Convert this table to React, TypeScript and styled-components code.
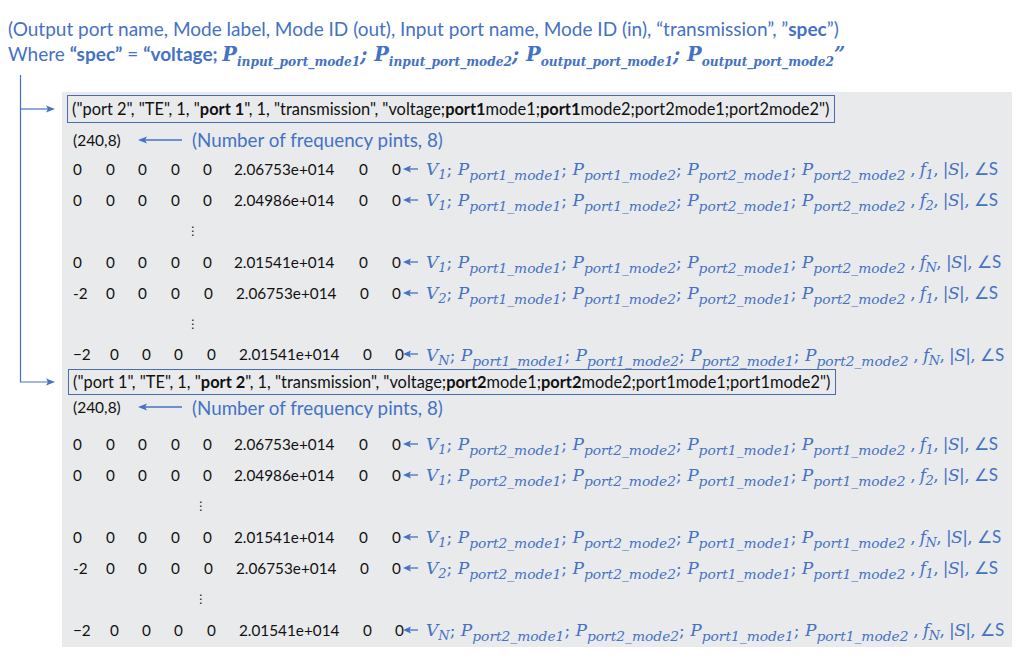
import React from 'react';
import styled, { createGlobalStyle } from 'styled-components';

const BLUE = '#4472C4';
const LINE = '#4472C4';
const SANS = "Lato, 'Liberation Sans', sans-serif";
const MATH = "'DejaVu Serif', 'Liberation Serif', serif";

const Global = createGlobalStyle`
  html, body { margin: 0; padding: 0; background: #ffffff; }
  body { font-family: ${SANS}; }
`;

const Page = styled.div`
  width: 1033px;
  height: 666px;
  overflow: hidden;
  display: flex;
  flex-direction: column;
`;

const Header = styled.header`
  padding: 16px 0 0 8px;
  color: ${BLUE};
  font-family: ${SANS};
  font-size: 19px;
`;

const HeaderLine = styled.div<{ $h: number }>`
  height: ${(p) => p.$h}px;
  line-height: ${(p) => p.$h}px;
  white-space: nowrap;
`;

const Strong = styled.b`
  font-weight: 700;
`;

const MathBold = styled.span`
  font-family: ${MATH};
  font-style: italic;
  font-weight: 700;
  font-size: 19.5px;
`;

const Sub = styled.span<{ $size: number; $drop?: number }>`
  font-size: ${(p) => p.$size}px;
  vertical-align: ${(p) => -(p.$drop ?? 5)}px;
  line-height: 0;
`;

const Body = styled.div`
  display: flex;
  margin-top: 9px;
`;

const Gutter = styled.div`
  width: 62px;
  flex: none;
`;

const Panel = styled.div`
  margin-top: 17px;
  width: 950px;
  height: 555px;
  box-sizing: border-box;
  background: #e9eaec;
  padding: 3px 0 0 5px;
  display: flex;
  flex-direction: column;
`;

const SpecBox = styled.div<{ $ml: number; $h: number }>`
  align-self: flex-start;
  margin-left: ${(p) => p.$ml}px;
  height: ${(p) => p.$h}px;
  line-height: ${(p) => p.$h - 2}px;
  box-sizing: border-box;
  border: 1px solid #4a6cad;
  padding: 0 5px 0 4px;
  font-size: 16.4px;
  color: #111;
  white-space: nowrap;
`;

const InfoRow = styled.div<{ $h: number; $pt: number; $pb: number }>`
  height: ${(p) => p.$h}px;
  box-sizing: border-box;
  padding: ${(p) => p.$pt}px 0 ${(p) => p.$pb}px 6px;
  display: flex;
  align-items: center;
`;

const InfoValue = styled.span`
  width: 65px;
  flex: none;
  font-size: 15.5px;
  color: #111;
`;

const InfoNote = styled.span`
  margin-left: 10px;
  color: ${BLUE};
  font-size: 18.8px;
  white-space: nowrap;
`;

const DataRow = styled.div<{ $h: number }>`
  height: ${(p) => p.$h}px;
  display: flex;
  align-items: center;
  padding-left: 6px;
  font-size: 15.3px;
  color: #111;
  white-space: nowrap;
`;

const Cell = styled.span<{ $w: number }>`
  width: ${(p) => p.$w}px;
  flex: none;
`;

const DotsRow = styled.div<{ $indent: number }>`
  height: 31px;
  display: flex;
  align-items: center;
  padding-left: ${(p) => p.$indent}px;
  font-family: 'DejaVu Sans', sans-serif;
  font-size: 12px;
  color: #111;
`;

const Anno = styled.span`
  margin-left: 8px;
  font-family: ${MATH};
  font-style: italic;
  font-size: 17px;
  color: ${BLUE};
  white-space: nowrap;
`;

const Sep = styled.span`
  font-style: normal;
`;

const Tail = styled.span`
  letter-spacing: -0.6px;
`;

const Upright = styled.span`
  font-family: ${SANS};
  font-style: normal;
  font-size: 17px;
  letter-spacing: 0;
`;

const Connector = () => (
  <svg width="62" height="312" viewBox="0 0 62 312">
    <g stroke={LINE} strokeWidth="1.2" fill="none">
      <path d="M20.5 0 V307 H50" />
      <path d="M20.5 34 H50" />
    </g>
    <g fill={LINE}>
      <polygon points="46,30.5 55,34 46,37.5 48,34" />
      <polygon points="46,303.5 55,307 46,310.5 48,307" />
    </g>
  </svg>
);

const LongArrow = () => (
  <svg width="44" height="10" viewBox="0 0 44 10">
    <path d="M6 5 H44" stroke={LINE} strokeWidth="1.3" />
    <polygon points="0,5 9,1.5 7,5 9,8.5" fill={LINE} />
  </svg>
);

const ShortArrow = () => (
  <svg width="15" height="10" viewBox="0 0 15 10">
    <path d="M6 5 H15" stroke={LINE} strokeWidth="1.3" />
    <polygon points="0,5 8,1.5 6.5,5 8,8.5" fill={LINE} />
  </svg>
);

const Term = ({ sub }: { sub: string }) => (
  <>
    P<Sub $size={13.8}>{sub}</Sub>
  </>
);

const Annotation = ({ v, f, terms }: { v: string; f: string; terms: string[] }) => (
  <Anno>
    V<Sub $size={13} $drop={4}>{v}</Sub>
    {terms.map((t) => (
      <React.Fragment key={t}>
        <Sep>; </Sep>
        <Term sub={t} />
      </React.Fragment>
    ))}
    <Tail>
      <Sep> , </Sep>f<Sub $size={13} $drop={4}>{f}</Sub>
      <Sep>, </Sep>|S|<Sep>, </Sep>
      <Upright>∠S</Upright>
    </Tail>
  </Anno>
);

const LAYOUTS: Record<string, number[]> = {
  a: [33, 32, 33, 32, 31, 125, 33, 11],
  b: [33, 32, 33, 33, 32, 124, 32, 11],
  c: [37, 32, 32, 33, 32, 124, 32, 8],
};

type Item =
  | { kind: 'row'; layout: 'a' | 'b' | 'c'; first: string; num: string; v: string; f: string }
  | { kind: 'dots' };

const ITEMS: Item[] = [
  { kind: 'row', layout: 'a', first: '0', num: '2.06753e+014', v: '1', f: '1' },
  { kind: 'row', layout: 'a', first: '0', num: '2.04986e+014', v: '1', f: '2' },
  { kind: 'dots' },
  { kind: 'row', layout: 'a', first: '0', num: '2.01541e+014', v: '1', f: 'N' },
  { kind: 'row', layout: 'b', first: '-2', num: '2.06753e+014', v: '2', f: '1' },
  { kind: 'dots' },
  { kind: 'row', layout: 'c', first: '−2', num: '2.01541e+014', v: 'N', f: 'N' },
];

const Block = ({
  terms,
  dotsIndent,
  lastH,
}: {
  terms: string[];
  dotsIndent: number;
  lastH: number;
}) => (
  <>
    {ITEMS.map((it, idx) => {
      if (it.kind === 'dots') {
        return (
          <DotsRow key={idx} $indent={dotsIndent}>
            ⋮
          </DotsRow>
        );
      }
      const widths = LAYOUTS[it.layout];
      const values = [it.first, '0', '0', '0', '0', it.num, '0', '0'];
      return (
        <DataRow key={idx} $h={idx === ITEMS.length - 1 ? lastH : 31}>
          {values.map((val, i) => (
            <Cell key={i} $w={widths[i]}>
              {val}
            </Cell>
          ))}
          <ShortArrow />
          <Annotation v={it.v} f={it.f} terms={terms} />
        </DataRow>
      );
    })}
  </>
);

export default function App() {
  return (
    <Page>
      <Global />
      <Header>
        <HeaderLine $h={26}>
          (Output port name, Mode label, Mode ID (out), Input port name, Mode ID (in), “transmission”, ”
          <Strong>spec</Strong>”)
        </HeaderLine>
        <HeaderLine $h={24}>
          Where <Strong>“spec”</Strong> = <Strong>“voltage; </Strong>
          <MathBold>
            P<Sub $size={12.2}>input_port_mode1</Sub>; P<Sub $size={12.2}>input_port_mode2</Sub>; P
            <Sub $size={12.2}>output_port_mode1</Sub>; P<Sub $size={12.2}>output_port_mode2</Sub>”
          </MathBold>
        </HeaderLine>
      </Header>
      <Body>
        <Gutter>
          <Connector />
        </Gutter>
        <Panel>
          <SpecBox $ml={0} $h={28}>
            ("port 2", "TE", 1, "<Strong>port 1</Strong>", 1, "transmission", "voltage;
            <Strong>port1</Strong>mode1;<Strong>port1</Strong>mode2;port2mode1;port2mode2")
          </SpecBox>
          <InfoRow $h={30} $pt={3} $pb={0}>
            <InfoValue>(240,8)</InfoValue>
            <LongArrow />
            <InfoNote>(Number of frequency pints, 8)</InfoNote>
          </InfoRow>
          <Block terms={['port1_mode1', 'port1_mode2', 'port2_mode1', 'port2_mode2']} dotsIndent={120} lastH={30} />
          <SpecBox $ml={1} $h={26}>
            ("port 1", "TE", 1, "<Strong>port 2</Strong>", 1, "transmission", "voltage;
            <Strong>port2</Strong>mode1;<Strong>port2</Strong>mode2;port1mode1;port1mode2")
          </SpecBox>
          <InfoRow $h={33} $pt={0} $pb={9}>
            <InfoValue>(240,8)</InfoValue>
            <LongArrow />
            <InfoNote>(Number of frequency pints, 8)</InfoNote>
          </InfoRow>
          <Block terms={['port2_mode1', 'port2_mode2', 'port1_mode1', 'port1_mode2']} dotsIndent={128} lastH={31} />
        </Panel>
      </Body>
    </Page>
  );
}
